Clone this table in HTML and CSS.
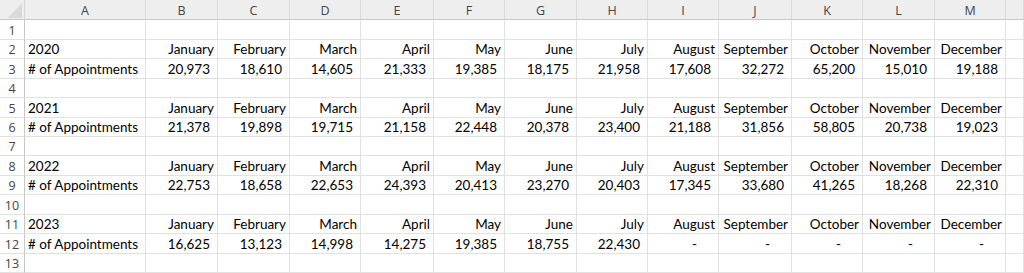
FILE: index.html
```html
<!DOCTYPE html>
<html>
<head>
<meta charset="utf-8">
<link rel="stylesheet" href="styles.css">
</head>
<body>
<div class="sheet">
  <div class="row head">
    <div class="corner"></div>
    <div class="ch">A</div><div class="ch">B</div><div class="ch">C</div><div class="ch">D</div><div class="ch">E</div><div class="ch">F</div><div class="ch">G</div><div class="ch">H</div><div class="ch">I</div><div class="ch">J</div><div class="ch">K</div><div class="ch">L</div><div class="ch">M</div><div class="ch"></div>
  </div>
  <div class="row h20">
    <div class="rh">1</div>
    <div class="c"></div><div class="c"></div><div class="c"></div><div class="c"></div><div class="c"></div><div class="c"></div><div class="c"></div><div class="c"></div><div class="c"></div><div class="c"></div><div class="c"></div><div class="c"></div><div class="c"></div><div class="c"></div>
  </div>
  <div class="row h19">
    <div class="rh">2</div>
    <div class="c t">2020</div><div class="c m">January</div><div class="c m">February</div><div class="c m">March</div><div class="c m">April</div><div class="c m">May</div><div class="c m">June</div><div class="c m">July</div><div class="c m">August</div><div class="c m">September</div><div class="c m">October</div><div class="c m">November</div><div class="c m">December</div><div class="c"></div>
  </div>
  <div class="row h20">
    <div class="rh">3</div>
    <div class="c t"># of Appointments</div><div class="c n">20,973</div><div class="c n">18,610</div><div class="c n">14,605</div><div class="c n">21,333</div><div class="c n">19,385</div><div class="c n">18,175</div><div class="c n">21,958</div><div class="c n">17,608</div><div class="c n">32,272</div><div class="c n">65,200</div><div class="c n">15,010</div><div class="c n">19,188</div><div class="c"></div>
  </div>
  <div class="row h19">
    <div class="rh">4</div>
    <div class="c"></div><div class="c"></div><div class="c"></div><div class="c"></div><div class="c"></div><div class="c"></div><div class="c"></div><div class="c"></div><div class="c"></div><div class="c"></div><div class="c"></div><div class="c"></div><div class="c"></div><div class="c"></div>
  </div>
  <div class="row h20">
    <div class="rh">5</div>
    <div class="c t">2021</div><div class="c m">January</div><div class="c m">February</div><div class="c m">March</div><div class="c m">April</div><div class="c m">May</div><div class="c m">June</div><div class="c m">July</div><div class="c m">August</div><div class="c m">September</div><div class="c m">October</div><div class="c m">November</div><div class="c m">December</div><div class="c"></div>
  </div>
  <div class="row h19">
    <div class="rh">6</div>
    <div class="c t"># of Appointments</div><div class="c n">21,378</div><div class="c n">19,898</div><div class="c n">19,715</div><div class="c n">21,158</div><div class="c n">22,448</div><div class="c n">20,378</div><div class="c n">23,400</div><div class="c n">21,188</div><div class="c n">31,856</div><div class="c n">58,805</div><div class="c n">20,738</div><div class="c n">19,023</div><div class="c"></div>
  </div>
  <div class="row h19">
    <div class="rh">7</div>
    <div class="c"></div><div class="c"></div><div class="c"></div><div class="c"></div><div class="c"></div><div class="c"></div><div class="c"></div><div class="c"></div><div class="c"></div><div class="c"></div><div class="c"></div><div class="c"></div><div class="c"></div><div class="c"></div>
  </div>
  <div class="row h20">
    <div class="rh">8</div>
    <div class="c t">2022</div><div class="c m">January</div><div class="c m">February</div><div class="c m">March</div><div class="c m">April</div><div class="c m">May</div><div class="c m">June</div><div class="c m">July</div><div class="c m">August</div><div class="c m">September</div><div class="c m">October</div><div class="c m">November</div><div class="c m">December</div><div class="c"></div>
  </div>
  <div class="row h19">
    <div class="rh">9</div>
    <div class="c t"># of Appointments</div><div class="c n">22,753</div><div class="c n">18,658</div><div class="c n">22,653</div><div class="c n">24,393</div><div class="c n">20,413</div><div class="c n">23,270</div><div class="c n">20,403</div><div class="c n">17,345</div><div class="c n">33,680</div><div class="c n">41,265</div><div class="c n">18,268</div><div class="c n">22,310</div><div class="c"></div>
  </div>
  <div class="row h20">
    <div class="rh">10</div>
    <div class="c"></div><div class="c"></div><div class="c"></div><div class="c"></div><div class="c"></div><div class="c"></div><div class="c"></div><div class="c"></div><div class="c"></div><div class="c"></div><div class="c"></div><div class="c"></div><div class="c"></div><div class="c"></div>
  </div>
  <div class="row h19">
    <div class="rh">11</div>
    <div class="c t">2023</div><div class="c m">January</div><div class="c m">February</div><div class="c m">March</div><div class="c m">April</div><div class="c m">May</div><div class="c m">June</div><div class="c m">July</div><div class="c m">August</div><div class="c m">September</div><div class="c m">October</div><div class="c m">November</div><div class="c m">December</div><div class="c"></div>
  </div>
  <div class="row h20">
    <div class="rh">12</div>
    <div class="c t"># of Appointments</div><div class="c n">16,625</div><div class="c n">13,123</div><div class="c n">14,998</div><div class="c n">14,275</div><div class="c n">19,385</div><div class="c n">18,755</div><div class="c n">22,430</div><div class="c d">-</div><div class="c d">-</div><div class="c d">-</div><div class="c d">-</div><div class="c d">-</div><div class="c"></div>
  </div>
  <div class="row h19">
    <div class="rh">13</div>
    <div class="c"></div><div class="c"></div><div class="c"></div><div class="c"></div><div class="c"></div><div class="c"></div><div class="c"></div><div class="c"></div><div class="c"></div><div class="c"></div><div class="c"></div><div class="c"></div><div class="c"></div><div class="c"></div>
  </div>
</div>
</body>
</html>
```
FILE: styles.css
```css
html, body {
  margin: 0;
  padding: 0;
  background: #ffffff;
}
.sheet {
  width: 1024px;
  height: 273px;
  overflow: hidden;
  font-family: Lato, "Liberation Sans", sans-serif;
  font-size: 13.5px;
  color: #000000;
}
.row {
  display: grid;
  grid-template-columns: 25px 121px 72px 72px 71px 73px 71px 72px 71px 71px 73px 71px 72px 71px 1fr;
}
.h20 { height: 20px; }
.h19 { height: 19px; }
.head {
  height: 20px;
  background: #eeeeee;
}
.corner {
  box-sizing: border-box;
  border-right: 1px solid #d6d6d6;
  border-bottom: 1px solid #c8c8c8;
  background-image: linear-gradient(to bottom right, transparent 50%, #d9d9d9 50%);
  background-size: 15px 14px;
  background-position: right 2px bottom 1px;
  background-repeat: no-repeat;
}
.ch {
  box-sizing: border-box;
  border-right: 1px solid #dadada;
  border-bottom: 1px solid #c8c8c8;
  display: flex;
  align-items: center;
  justify-content: center;
  font-family: "Open Sans", "Liberation Sans", sans-serif;
  font-size: 12.5px;
  color: #444444;
  padding-top: 1px;
}
.rh {
  box-sizing: border-box;
  border-right: 1px solid #c8c8c8;
  border-bottom: 1px solid #e1e1e1;
  display: flex;
  align-items: center;
  justify-content: center;
  font-family: "Open Sans", "Liberation Sans", sans-serif;
  font-size: 12.5px;
  color: #444444;
  padding-top: 1px;
}
.c {
  box-sizing: border-box;
  border-right: 1px solid #e1e1e1;
  border-bottom: 1px solid #e1e1e1;
  display: flex;
  align-items: flex-end;
  line-height: 16px;
  white-space: nowrap;
  overflow: visible;
  padding-bottom: 1px;
}
.t {
  justify-content: flex-start;
  padding-left: 3px;
}
.m {
  justify-content: flex-end;
  padding-right: 3px;
}
.n {
  justify-content: flex-end;
  padding-right: 7px;
}
.d {
  justify-content: flex-end;
  padding-right: 21px;
}
```
